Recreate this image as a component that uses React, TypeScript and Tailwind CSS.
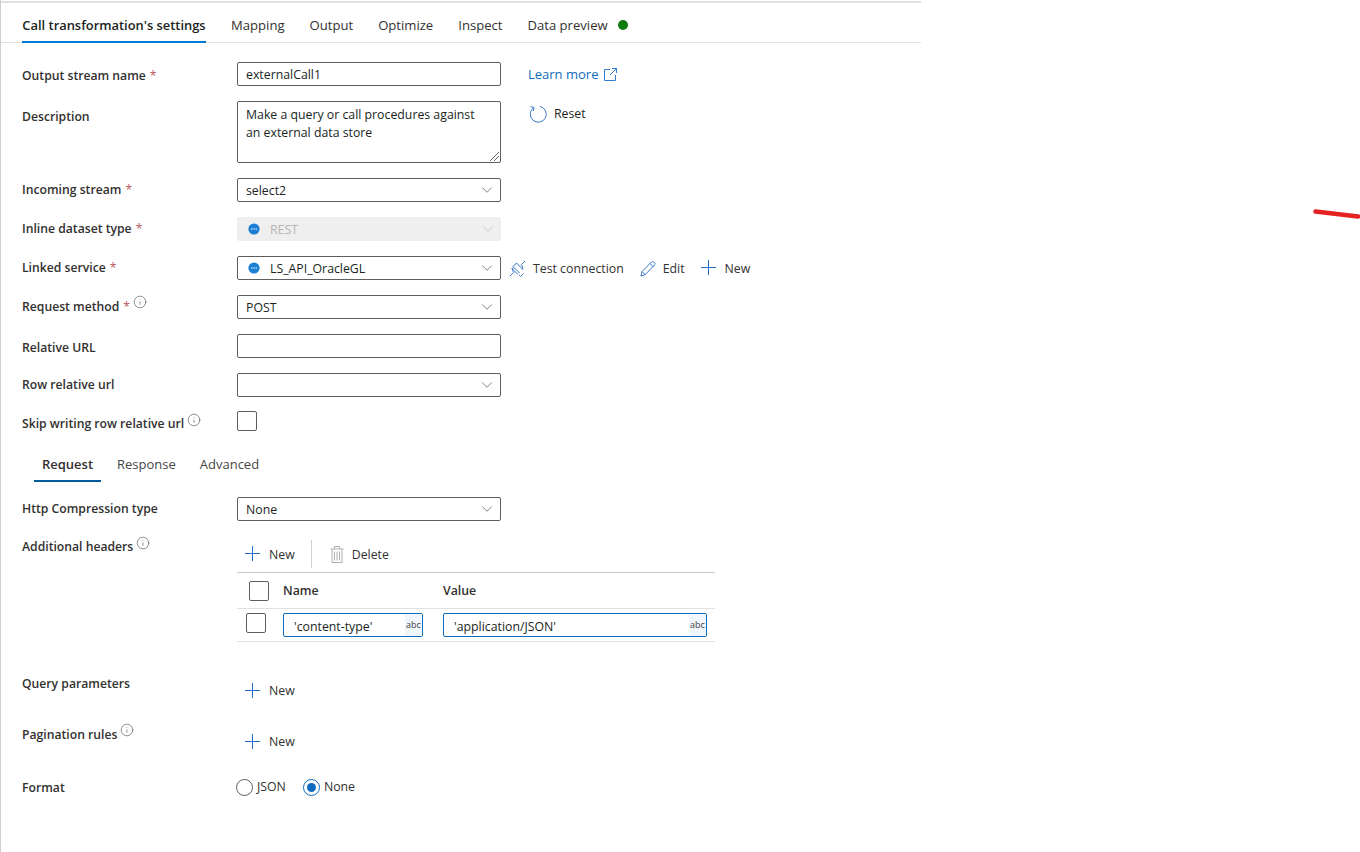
import { ChevronDown, Info } from "lucide-react";
import type { ReactNode } from "react";

const topTabs = ["Mapping", "Output", "Optimize", "Inspect", "Data preview"];

function Req() {
  return <span className="ml-[4px] self-start font-normal text-[#b8595e]">*</span>;
}

function Tip({ className = "" }: { className?: string }) {
  return <Info size={14} strokeWidth={1.1} className={`ml-[3px] shrink-0 text-[#555] ${className}`} />;
}

function Row({ label, className, labelClass = "pt-[4px]", children }: { label: ReactNode; className: string; labelClass?: string; children: ReactNode }) {
  return (
    <div className={`flex shrink-0 ${className}`}>
      <div className={`flex w-[215px] shrink-0 items-start text-[12.2px] font-[550] text-[#323130] ${labelClass}`}>{label}</div>
      {children}
    </div>
  );
}

function RestIcon() {
  return (
    <svg width="12" height="12" viewBox="0 0 12 12" className="shrink-0">
      <circle cx="6" cy="6" r="5.6" fill="#1b7fd6" />
      <path d="M3.200 6h1.200M5.400 6h1.200M7.600 6h1.200" stroke="#d7e9f8" strokeWidth="1.400" />
    </svg>
  );
}

function Select({ value, icon, disabled }: { value?: string; icon?: boolean; disabled?: boolean }) {
  const pad = icon ? (disabled ? "pl-[11px]" : "pl-[10px]") : "pl-[8px]";
  return (
    <div
      className={`flex h-[24px] w-[264px] shrink-0 items-center rounded-[2px] pr-[4px] ${pad} ${
        disabled ? "bg-[#efefef] text-[#b5b5b5]" : "border border-[#605e5c] text-[#201f1e]"
      }`}
    >
      {icon && (
        <span className="mr-[10px] flex">
          <RestIcon />
        </span>
      )}
      <span className="flex-1 pt-[1px]">{value}</span>
      <ChevronDown size={18} strokeWidth={0.9} className={disabled ? "text-[#b5b5b5]" : "text-[#444]"} />
    </div>
  );
}

function NewButton({ className = "" }: { className?: string }) {
  return (
    <div className={`flex items-center text-[#323130] ${className}`}>
      <svg width="15" height="15" viewBox="0 0 15 15" stroke="#1f6fc4" strokeWidth="1" className="mr-[9px] shrink-0 -translate-y-[1px]">
        <path d="M0 7.500h15M7.500 0v15" />
      </svg>
      New
    </div>
  );
}

function CheckBox({ className = "" }: { className?: string }) {
  return <div className={`h-[20px] w-[20px] shrink-0 rounded-[2px] border border-[#605e5c] ${className}`} />;
}

function ExprInput({ value, className }: { value: string; className: string }) {
  return (
    <div className={`flex h-[24px] shrink-0 items-stretch rounded-[2px] border border-[#0f6cbd] ${className}`}>
      <span className="flex-1 pl-[10px] pt-[1px] leading-[24px] text-[#201f1e]">{value}</span>
      <span className="flex w-[17px] items-center justify-center bg-[#eff6fc] text-[9px] text-[#444]">abc</span>
    </div>
  );
}

function Radio({ label, on }: { label: string; on?: boolean }) {
  return (
    <div className="flex items-center">
      <span className={`flex h-[17px] w-[17px] items-center justify-center rounded-full border ${on ? "border-[#0f6cbd]" : "border-[#605e5c]"}`}>
        {on && <span className="h-[9px] w-[9px] rounded-full bg-[#0f6cbd]" />}
      </span>
      <span className="ml-[4px] text-[#323130]">{label}</span>
    </div>
  );
}

export default function App() {
  return (
    <div className="relative h-[852px] w-[1360px] overflow-hidden bg-white font-['Open_Sans',sans-serif] text-[12.3px] leading-[16px] text-[#323130]">
      <div className="flex h-full w-[921px] flex-col border-l border-[#cfcfcf] pl-[21px]">
        <div className="ml-[-21px] mt-[1px] h-[2px] shrink-0 bg-[#e1e1e1]" />

        <div className="ml-[-21px] flex h-[40px] shrink-0 border-b border-[#e1e1e1] pl-[21px] text-[13.1px]">
          <div className="flex h-[40px] w-[184px] items-center justify-center whitespace-nowrap border-b-[2px] border-[#0078d4] pt-[6px] text-[12.9px] font-[550] text-[#201f1e]">
            Call transformation's settings
          </div>
          {topTabs.map((t) => (
            <div key={t} className="ml-[25px] flex items-center pt-[4px] text-[#323130]">
              {t}
              {t === "Data preview" && <span className="ml-[10px] h-[10px] w-[10px] rounded-full bg-[#107c10]" />}
            </div>
          ))}
        </div>

        <Row
          className="mt-[19px] h-[24px]"
          labelClass="pt-[6px]"
          label={
            <>
              Output stream name
              <Req />
            </>
          }
        >
          <div className="flex h-[24px] w-[264px] items-center rounded-[2px] border border-[#605e5c] pl-[8px] pt-[1px] text-[#201f1e]">externalCall1</div>
          <div className="ml-[27px] flex items-center text-[13px] text-[#0f6cbd]">
            Learn more
            <svg width="13" height="13" viewBox="0 0 13 13" fill="none" stroke="#2f7fd0" className="ml-[6px]">
              <path d="M6 1.500H.5v11h11V7M8 .5h4.500V5M12.500.5 6 7" />
            </svg>
          </div>
        </Row>

        <Row className="mt-[15px] h-[62px]" labelClass="pt-[8px]" label="Description">
          <div className="relative h-[62px] w-[264px] rounded-[2px] border border-[#605e5c] px-[8px] pt-[4px] leading-[18px] text-[#201f1e]">
            Make a query or call procedures against
            <br />
            an external data store
            <svg width="9" height="9" viewBox="0 0 9 9" className="absolute bottom-[1px] right-[1px]" stroke="#666" fill="none">
              <path d="M0 9 9 0M4 9l5-5" />
            </svg>
          </div>
          <div className="ml-[28px] flex h-[24px] items-center pt-[1px] text-[#201f1e]">
            <svg width="18" height="18" viewBox="0 0 18 18" fill="none" stroke="#3a78c9" strokeWidth="1" className="mr-[7px]">
              <path d="M4.800 2.600A8 8 0 1 0 11 1.400" />
              <path d="M1.500 1.500 5 2.500 4.300 6" />
            </svg>
            Reset
          </div>
        </Row>

        <Row
          className="mt-[15px] h-[24px]"
          label={
            <>
              Incoming stream
              <Req />
            </>
          }
        >
          <Select value="select2" />
        </Row>
        <Row
          className="mt-[15px] h-[24px]"
          label={
            <>
              Inline dataset type
              <Req />
            </>
          }
        >
          <Select value="REST" icon disabled />
        </Row>
        <Row
          className="mt-[15px] h-[24px]"
          label={
            <>
              Linked service
              <Req />
            </>
          }
        >
          <Select value="LS_API_OracleGL" icon />
          <div className="ml-[8px] flex items-center pt-[1px] text-[#323130]">
            <svg width="17" height="17" viewBox="0 0 17 17" fill="none" stroke="#3a78c9" strokeWidth="1" className="mr-[7px]">
              <path d="M1 16l3.500-3.500M16 1l-3.500 3.500M2.500 8l6.500 6.500M4 6.500l6.500 6.500M7.500 3l6.500 6.500" />
              <path d="M4 6.500C5.500 4.500 7 3.500 8 3.500M5 12.500C3.500 11 3 10 4 7.500M12 4.500c1.500 1.500 2 3 1 5" />
              <path d="M10 15l1.500 1.500 3-3" />
            </svg>
            Test connection
            <svg width="16" height="16" viewBox="0 0 16 16" fill="none" stroke="#3a78c9" strokeWidth="1" className="ml-[16px] mr-[7px]">
              <path d="M1 15l1-4.500L11.500 1c.8-.6 2-.6 2.800.3.800.8.800 2 .2 2.700L5 13.800 1 15zM2 10.500 5.500 14M10 2.500l3.500 3.500" />
            </svg>
            Edit
            <NewButton className="ml-[16px]" />
          </div>
        </Row>
        <Row
          className="mt-[15px] h-[24px]"
          label={
            <>
              Request method
              <Req />
              <Tip className="mt-[-4px]" />
            </>
          }
        >
          <Select value="POST" />
        </Row>
        <Row className="mt-[15px] h-[24px]" labelClass="pt-[6px]" label="Relative URL">
          <div className="h-[24px] w-[264px] rounded-[2px] border border-[#605e5c]" />
        </Row>
        <Row className="mt-[15px] h-[24px]" labelClass="pt-[4px]" label="Row relative url">
          <Select />
        </Row>
        <Row
          className="mt-[14px] h-[20px]"
          labelClass="pt-[5px]"
          label={
            <>
              Skip writing row relative url
              <Tip className="mt-[-3px]" />
            </>
          }
        >
          <CheckBox />
        </Row>

        <div className="mt-[19px] flex h-[32px] shrink-0 pl-[12px] text-[13px]">
          <div className="flex h-[32px] w-[67px] items-start justify-center border-b-[2px] border-[#005a9e] pt-[6px] font-[550] text-[#323130]">Request</div>
          <div className="ml-[16px] pt-[6px] text-[#484644]">Response</div>
          <div className="ml-[24px] pt-[6px] text-[#484644]">Advanced</div>
        </div>

        <Row className="mt-[15px] h-[24px]" label="Http Compression type">
          <Select value="None" />
        </Row>

        <Row
          className="mt-[18px] h-[104px]"
          labelClass="pt-0"
          label={
            <>
              Additional headers
              <Tip className="mt-[-3px]" />
            </>
          }
        >
          <div className="flex w-[478px] flex-col">
            <div className="flex h-[34px] shrink-0 items-center border-b border-[#c8c8c8] pb-[2px] pl-[8px]">
              <NewButton />
              <div className="ml-[16px] mt-[-2px] h-[28px] w-px bg-[#d0d0d0]" />
              <svg width="14" height="17" viewBox="0 0 14 17" fill="none" stroke="#b0aeac" className="ml-[18px] mr-[8px]">
                <path d="M.5 3h13M4.500 3V.5h5V3M2 3v13.500h10V3" />
                <path d="M4.500 5.500v9M7 5.500v9M9.500 5.500v9" />
              </svg>
              <span className="text-[#323130]">Delete</span>
            </div>
            <div className="flex h-[36px] shrink-0 items-center border-b border-[#e1e1e1] font-[550] text-[#323130]">
              <CheckBox className="ml-[12px]" />
              <span className="ml-[14px] w-[160px]">Name</span>
              <span>Value</span>
            </div>
            <div className="flex h-[33px] shrink-0 items-start border-b border-[#e1e1e1] pt-[4px]">
              <CheckBox className="ml-[9px]" />
              <ExprInput value="'content-type'" className="ml-[17px] w-[140px]" />
              <ExprInput value="'application/JSON'" className="ml-[20px] w-[264px]" />
            </div>
          </div>
        </Row>

        <Row className="mt-[33px] h-[24px]" labelClass="pt-0" label="Query parameters">
          <NewButton className="ml-[8px] mt-[6px]" />
        </Row>
        <Row
          className="mt-[27px] h-[24px]"
          labelClass="pt-0"
          label={
            <>
              Pagination rules
              <Tip className="mt-[-4px]" />
            </>
          }
        >
          <NewButton className="ml-[8px] mt-[6px]" />
        </Row>
        <Row className="mt-[27px] h-[24px]" labelClass="pt-[2px]" label="Format">
          <div className="ml-[-1px] flex h-[18px] items-center gap-[17px]">
            <Radio label="JSON" />
            <Radio label="None" on />
          </div>
        </Row>
      </div>

      <svg width="48" height="12" viewBox="0 0 48 12" className="absolute left-[1313px] top-[209px]">
        <path d="M2.500 2.500 45 7.500" stroke="#e52222" strokeWidth="4.500" strokeLinecap="round" />
      </svg>
    </div>
  );
}
